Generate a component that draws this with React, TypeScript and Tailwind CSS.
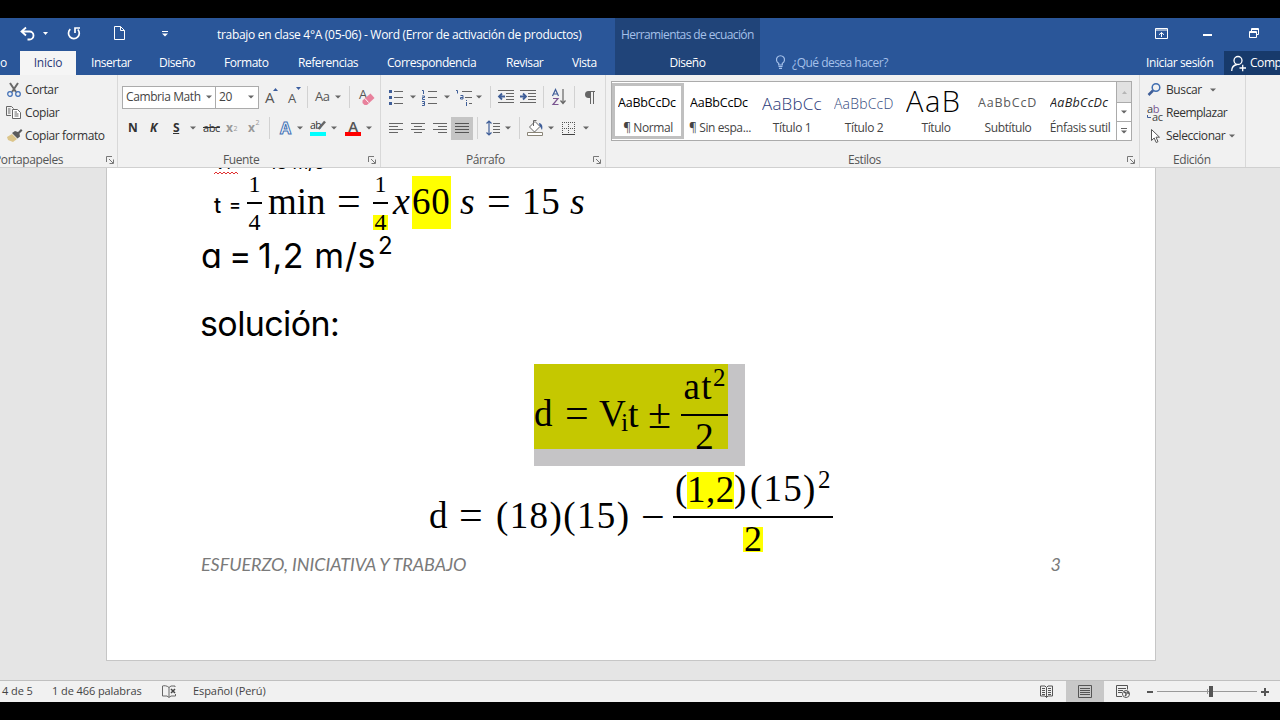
import React from 'react';

type BoxProps = { className?: string; children?: React.ReactNode };
type IconProps = BoxProps & { w: number; h: number };

const Icon: React.FC<IconProps> = ({ w, h, className = '', children }) => (
  <svg
    width={w}
    height={h}
    viewBox={`0 0 ${w} ${h}`}
    fill="none"
    className={`block shrink-0 overflow-visible ${className}`}
  >
    {children}
  </svg>
);

const Caret: React.FC<{ className?: string }> = ({ className = '' }) => (
  <Icon w={6} h={4} className={className}>
    <path d="M0 0.5h6l-3 3z" fill="#666" />
  </Icon>
);

const Sep: React.FC<{ className?: string }> = ({ className = '' }) => (
  <div className={`w-px h-[22px] shrink-0 bg-[#d2d2d2] ${className}`} />
);

// Piece of a formula or a text line
const Part: React.FC<BoxProps> = ({ className = '', children }) => (
  <span className={`block shrink-0 whitespace-nowrap ${className}`}>{children}</span>
);

const Launcher: React.FC<{ className?: string }> = ({ className = '' }) => (
  <Icon w={8} h={8} className={className}>
    <path d="M0.5 6V0.5H6M3 3l4 4M7.5 3.5v4h-4" stroke="#777" />
  </Icon>
);

const tabs = [
  { label: 'Insertar', className: 'w-[83px] pl-[15px]' },
  { label: 'Diseño', className: 'w-[65px]' },
  { label: 'Formato', className: 'w-[74px]' },
  { label: 'Referencias', className: 'w-[89px]' },
  { label: 'Correspondencia', className: 'w-[119px]' },
  { label: 'Revisar', className: 'w-[66px]' },
  { label: 'Vista', className: 'w-[43px]' },
];

const styles = [
  { label: '¶ Normal', sample: 'AaBbCcDc', className: 'text-[12.5px] text-black tracking-[-0.2px]', active: true },
  { label: '¶ Sin espa...', sample: 'AaBbCcDc', className: 'text-[12.5px] text-black tracking-[-0.2px]' },
  { label: 'Título 1', sample: 'AaBbCc', className: 'text-[17px] font-light text-[#2b3a78] tracking-[0.2px]' },
  { label: 'Título 2', sample: 'AaBbCcD', className: 'text-[14px] font-light text-[#33497c] tracking-[0.2px]' },
  { label: 'Título', sample: 'AaB', className: 'text-[29px] font-light text-black tracking-[1.5px] pb-[7px]' },
  { label: 'Subtítulo', sample: 'AaBbCcD', className: 'text-[12.5px] text-[#5a5a5a] tracking-[0.8px]' },
  { label: 'Énfasis sutil', sample: 'AaBbCcDc', className: 'text-[12.5px] italic text-[#222] tracking-[0.3px]' },
];

const TitleBar = () => (
  <div className="flex h-[33px] items-center text-white">
    <Icon w={15} h={14} className="ml-[20px] mt-[-2px]">
      <path d="M6 0.5L1.500 4.500 6 8.500M2 4.500h7.500a4 4 0 0 1 0 8H7.500" stroke="#fff" strokeWidth="1.8" />
    </Icon>
    <Icon w={5} h={3} className="ml-[8px] mt-[-3px]">
      <path d="M0 0h5L2.500 3z" fill="#fff" />
    </Icon>
    <Icon w={14} h={13} className="ml-[19px] mt-[-3px]">
      <path d="M3.300 2.200A5.400 5.400 0 1 0 10.800 2.500M8 6V1h5" stroke="#fff" strokeWidth="1.7" />
    </Icon>
    <Icon w={12} h={14} className="ml-[32px] mt-[-3px]">
      <path d="M1.500 0.500h6l4 4v9h-10zM7.500 0.500v4h4" stroke="#fff" />
    </Icon>
    <Icon w={6} h={6} className="ml-[37px] mt-[-2px]">
      <path d="M0 0.500h6" stroke="#fff" />
      <path d="M0 2.500h6l-3 3z" fill="#fff" />
    </Icon>
    <div className="ml-[49px] w-[398px] whitespace-nowrap text-[12px] tracking-[-0.3px]">
      trabajo en clase 4°A (05-06) - Word (Error de activación de productos)
    </div>
    <div className="flex h-full w-[145px] items-center whitespace-nowrap bg-[#204479] pl-[6px] text-[12px] tracking-[-0.6px] text-[#a5c0ea]">
      Herramientas de ecuación
    </div>
    <Icon w={13} h={11} className="ml-[395px] mt-[-2px]">
      <path d="M0.500 0.500h12v10H0.500zM0 2h13M6.500 9V4.500M4 6.800l2.500-2.300L9 6.800" stroke="#fff" />
    </Icon>
    <div className="ml-[35px] h-[2px] w-[9px] bg-white" />
    <Icon w={10} h={10} className="ml-[37px] mt-[-3px]">
      <path d="M0.500 3.500h7v6h-7zM0 4.500h8M2.500 3V0.500h7v6H8M2.500 1.500h7" stroke="#fff" />
    </Icon>
  </div>
);

const TabBar = () => (
  <div className="flex h-6 items-stretch whitespace-nowrap text-[12px] tracking-[-0.45px] text-white">
    <div className="flex w-[20px] items-center">o</div>
    <div className="flex w-14 items-center justify-center bg-[#f5f5f5] text-[#2b3a78] tracking-[-0.2px]">Inicio</div>
    {tabs.map((tab) => (
      <div key={tab.label} className={`flex shrink-0 items-center ${tab.className}`}>
        {tab.label}
      </div>
    ))}
    <div className="flex w-[145px] items-center justify-center bg-[#204479]">Diseño</div>
    <div className="flex w-[386px] items-center pl-[16px] text-[#a5c0ea]">
      <Icon w={9} h={14} className="mt-[-2px]">
        <path d="M2.700 10V8.300A4 4 0 1 1 6.300 8.300V10zM2.500 11.500h4M3 13.300h3" stroke="#a5c0ea" strokeWidth="1.200" />
      </Icon>
      <span className="ml-[7px] tracking-[-0.52px]">¿Qué desea hacer?</span>
    </div>
    <div className="flex w-[78px] items-center tracking-[-0.4px]">Iniciar sesión</div>
    <div className="ml-auto flex w-[56px] items-center overflow-hidden bg-[#173a6b] pl-[7px]">
      <Icon w={15} h={15}>
        <circle cx="7" cy="4.500" r="4" stroke="#fff" strokeWidth="1.300" />
        <path d="M0.700 15c0-4 2.500-6 5.300-6.500M8.500 12h6.500M11.700 8.800v6.400" stroke="#fff" strokeWidth="1.300" />
      </Icon>
      <span className="ml-[4px]">Compartir</span>
    </div>
  </div>
);

const ClipboardGroup = () => (
  <div className="flex h-full w-[118px] flex-col pt-[3px]">
    <div className="flex h-[23px] items-center">
      <Icon w={14} h={14} className="ml-[7px]">
        <path d="M3 0l6 9M11 0L5 9" stroke="#6a6a6a" strokeWidth="2" />
        <circle cx="3" cy="11" r="2.300" stroke="#3e6db5" strokeWidth="1.200" />
        <circle cx="11" cy="11" r="2.300" stroke="#3e6db5" strokeWidth="1.200" />
      </Icon>
      <span className="ml-[4px]">Cortar</span>
    </div>
    <div className="flex h-[23px] items-center">
      <Icon w={15} h={13} className="ml-[6px]">
        <path d="M5 9.500H0.500v-9h5l2 2M2 3h2.500M2 5h2.500M2 7h2.500" stroke="#666" />
        <path d="M6.500 3.500h5l3 3v6h-8zM8.500 6h2.500M8.500 8h4M8.500 10h4" stroke="#666" fill="#fff" />
      </Icon>
      <span className="ml-[4px]">Copiar</span>
    </div>
    <div className="flex h-[23px] items-center">
      <Icon w={15} h={13} className="ml-[7px]">
        <path d="M0 8l5-3 5 5-4 3-5-2z" fill="#dcc58a" />
        <path d="M5 4l3-2 3 1 3-3 1.500 1.500-3 3 .5 3-2.500 2z" fill="#5c5c5c" />
      </Icon>
      <span className="ml-[3px]">Copiar formato</span>
    </div>
    <div className="mt-auto flex h-[15px] items-center text-[#555]">
      <span className="ml-[-6px] w-[112px] tracking-[-0.4px]">Portapapeles</span>
      <Launcher />
    </div>
  </div>
);

const FontGroup = () => (
  <div className="flex h-full w-[263px] flex-col pt-[10px]">
    <div className="flex h-[24px] items-center">
      <div className="ml-[4px] flex h-[23px] w-[94px] items-center border border-[#ababab] bg-white pl-[3px] text-[#444]">
        <span className="w-[80px] whitespace-nowrap">Cambria Math</span>
        <Caret />
      </div>
      <div className="ml-[-1px] flex h-[23px] w-[44px] items-center border border-[#ababab] bg-white pl-[3px] text-[#444]">
        <span className="w-[29px]">20</span>
        <Caret />
      </div>
      <div className="ml-[6px] flex w-[23px] text-[15px] leading-[20px] text-[#555]">
        A<Icon w={5} h={3} className="mt-[1px] ml-[-1px]"><path d="M0 3h5L2.500 0z" fill="#3b5ea0" /></Icon>
      </div>
      <div className="flex w-[19px] text-[13px] leading-[18px] text-[#555]">
        <span className="mt-[2px]">A</span>
        <Icon w={5} h={3}><path d="M0 0h5L2.500 3z" fill="#3b5ea0" /></Icon>
      </div>
      <Sep />
      <span className="ml-[7px] w-[20px] text-[13px] text-[#555]">Aa</span>
      <Caret />
      <Sep className="ml-[8px]" />
      <div className="ml-[9px] flex text-[13px] text-[#555]">
        <span className="mt-[-5px] w-[3px]">A</span>
        <Icon w={12} h={12} className="mt-[3px]">
          <path d="M0.500 7.500l8-7 4 4.500-7.500 7H2.500l-2-2z" fill="#e8819c" />
          <path d="M3 5.500L6.500 9.500" stroke="#fff" />
        </Icon>
      </div>
    </div>
    <div className="mt-[6px] flex h-[26px] items-center whitespace-nowrap text-[12px] text-[#333]">
      <b className="ml-[10px] w-[22px]">N</b>
      <b className="w-[23px] italic">K</b>
      <b className="w-[17px] underline">S</b>
      <Caret />
      <span className="ml-[7px] w-[23px] text-[11px] tracking-[-0.4px] line-through">abc</span>
      <span className="flex w-[22px] text-[#999]"><b>x</b><span className="ml-[1px] mt-[5px] text-[7px]">2</span></span>
      <span className="flex w-[21px] text-[#999]"><b>x</b><span className="ml-[1px] mt-[-1px] text-[7px]">2</span></span>
      <Sep />
      <b className="ml-[10px] w-[14px] text-[16px] leading-[18px] text-white [-webkit-text-stroke:1px_#4472b5]">A</b>
      <Caret className="ml-[3px]" />
      <div className="ml-[7px] flex w-[16px] flex-col">
        <div className="flex h-[12px] text-[10.500px] leading-[10px] tracking-[-0.5px] text-[#333]">
          <span className="w-[6px]">ab</span>
          <Icon w={10} h={11}><path d="M2.500 9L9 1.500" stroke="#666" strokeWidth="2.500" /></Icon>
        </div>
        <div className="h-1 w-4 bg-[#00ffff]" />
      </div>
      <Caret className="ml-[5px]" />
      <div className="ml-[8px] flex w-[16px] flex-col items-center">
        <b className="h-[12px] text-[15px] leading-[12px] font-semibold text-[#555]">A</b>
        <div className="h-1 w-4 bg-[#ff0000]" />
      </div>
      <Caret className="ml-[5px]" />
    </div>
    <div className="mt-auto flex h-[15px] items-center text-[#555]">
      <span className="ml-[105px] w-[145px]">Fuente</span>
      <Launcher />
    </div>
  </div>
);

const ParagraphGroup = () => (
  <div className="flex h-full w-[225px] flex-col pt-[10px]">
    <div className="flex h-[24px] items-center">
      <Icon w={14} h={15} className="ml-[8px]">
        <path d="M5 1.500h9M5 7.500h9M5 13.500h9" stroke="#666" />
        <path d="M0 0h3v3H0zM0 6h3v3H0zM0 12h3v3H0z" fill="#3f5e98" />
      </Icon>
      <Caret className="ml-[7px]" />
      <Icon w={15} h={15} className="ml-[6px]">
        <path d="M6 1.500h9M6 7.500h9M6 13.500h9" stroke="#666" />
        <path d="M0 0.500h1.500v3.500M0 6h2.500v1.500H0.500V9.500H3M0 11.500h2.500v4H0M0.500 13.500h2" stroke="#3f5e98" />
      </Icon>
      <Caret className="ml-[7px]" />
      <Icon w={16} h={15} className="ml-[6px]">
        <path d="M6 1.500h10M9 7.500h7M13 13.500h3" stroke="#666" />
        <path d="M0 0.500h1.500v3M4.500 5.500H7V9H4.500V7.500H7M10.500 10v1M10.500 12v4" stroke="#3f5e98" />
      </Icon>
      <Caret className="ml-[4px]" />
      <Sep className="ml-[8px]" />
      <Icon w={16} h={14} className="ml-[7px]">
        <path d="M0 0.500h16M8 3.500h8M8 6.500h8M8 9.500h8M0 12.500h16" stroke="#666" />
        <path d="M7 6.500H1M4 3.500L1 6.500l3 3" stroke="#3f5e98" strokeWidth="1.800" />
      </Icon>
      <Icon w={16} h={14} className="ml-[6px]">
        <path d="M0 0.500h16M8 3.500h8M8 6.500h8M8 9.500h8M0 12.500h16" stroke="#666" />
        <path d="M0 6.500h6M3 3.500l3 3-3 3" stroke="#3f5e98" strokeWidth="1.800" />
      </Icon>
      <Sep className="ml-[7px]" />
      <Icon w={14} h={16} className="ml-[8px]">
        <path d="M0.500 7L3.500 0.500 6.500 7M1.500 5h4" stroke="#3f5e98" strokeWidth="1.200" />
        <path d="M1 9.500h5L1 15.500h5.500" stroke="#7a5590" strokeWidth="1.200" />
        <path d="M11 0v14M8.500 11.500l2.500 3 2.500-3" stroke="#666" strokeWidth="1.200" />
      </Icon>
      <Sep className="ml-[8px]" />
      <Icon w={10} h={13} className="ml-[10px]">
        <path d="M5 0.500h5M5.500 0v13M8.500 0v13" stroke="#666" />
        <path d="M6 0H3.500a3.300 3.300 0 0 0 0 7H6z" fill="#666" />
      </Icon>
    </div>
    <div className="mt-[6px] flex h-[26px] items-center">
      <Icon w={14} h={11} className="ml-[8px]">
        <path d="M0 0.500h14M0 3.500h9M0 6.500h14M0 9.500h9" stroke="#666" />
      </Icon>
      <Icon w={14} h={11} className="ml-[8px]">
        <path d="M0 0.500h14M3 3.500h8M0 6.500h14M3 9.500h8" stroke="#666" />
      </Icon>
      <Icon w={14} h={11} className="ml-[8px]">
        <path d="M0 0.500h14M5 3.500h9M0 6.500h14M5 9.500h9" stroke="#666" />
      </Icon>
      <div className="ml-[4px] flex h-[23px] w-[22px] items-center justify-center bg-[#c5c5c5]">
        <Icon w={14} h={11}><path d="M0 0.500h14M0 3.500h14M0 6.500h14M0 9.500h14" stroke="#555" /></Icon>
      </div>
      <Sep className="ml-[4px]" />
      <Icon w={14} h={16} className="ml-[8px]">
        <path d="M3 1v14M0.500 3.500L3 1l2.500 2.500M0.500 12.500L3 15l2.500-2.500" stroke="#3f5e98" strokeWidth="1.200" />
        <path d="M7 3.500h7M7 6.500h7M7 9.500h7M7 12.500h7" stroke="#666" />
      </Icon>
      <Caret className="ml-[5px]" />
      <Sep className="ml-[8px]" />
      <Icon w={16} h={16} className="ml-[7px]">
        <path d="M2.500 7L8 1.500l5 5-5.500 5.500zM6.500 6V0.500h3" stroke="#666" fill="#fff" />
        <path d="M12 3c3 .5 4 3 3 7-1-1-1-3-2.500-4z" fill="#3f5e98" />
        <path d="M0.500 12.500h15v3h-15z" stroke="#8a8577" fill="#fff" />
      </Icon>
      <Caret className="ml-[5px]" />
      <Icon w={13} h={13} className="ml-[8px]">
        <path d="M0 0.500h13M0 6.500h13M0.500 0v12M6.500 0v12M12.500 0v12" stroke="#555" strokeDasharray="1 1" />
        <path d="M0 12.500h13" stroke="#444" />
      </Icon>
      <Caret className="ml-[8px]" />
    </div>
    <div className="mt-auto flex h-[15px] items-center text-[#555]">
      <span className="ml-[85px] w-[127px]">Párrafo</span>
      <Launcher />
    </div>
  </div>
);

const StylesGroup = () => (
  <div className="flex h-full w-[534px] flex-col pt-[6px]">
    <div className="ml-[5px] flex h-[60px] w-[521px] border border-[#ababab] bg-white">
      {styles.map((s) => (
        <div
          key={s.label}
          className={`my-px flex w-[72px] shrink-0 flex-col border-[3px] px-[3px] ${
            s.active ? 'border-[#c0c0c0]' : 'border-transparent'
          }`}
        >
          <div className={`flex h-[35px] shrink-0 items-center overflow-hidden whitespace-nowrap leading-none ${s.className}`}>
            {s.sample}
          </div>
          <div className="flex justify-center whitespace-nowrap leading-[14px] text-[#444]">
            {s.label}
          </div>
        </div>
      ))}
      <div className="ml-auto flex w-[15px] flex-col border-l border-[#ababab]">
        <div className="flex h-[20px] items-center justify-center bg-[#e1e1e1]">
          <Icon w={5} h={3}><path d="M0 3h5L2.500 0z" fill="#b5b5b5" /></Icon>
        </div>
        <div className="flex h-[20px] items-center justify-center border-y border-[#ababab]">
          <Caret />
        </div>
        <div className="flex flex-1 items-center justify-center">
          <Icon w={6} h={6}>
            <path d="M0 0.500h6" stroke="#666" />
            <path d="M0 2.500h6l-3 3z" fill="#666" />
          </Icon>
        </div>
      </div>
    </div>
    <div className="mt-auto flex h-[15px] items-center text-[#555]">
      <span className="ml-[242px] w-[279px]">Estilos</span>
      <Launcher />
    </div>
  </div>
);

const EditingGroup = () => (
  <div className="flex h-full w-[106px] flex-col pt-[3px]">
    <div className="flex h-[23px] items-center">
      <Icon w={13} h={13} className="ml-[8px]">
        <circle cx="8" cy="4.500" r="3.800" stroke="#3f6db0" strokeWidth="1.500" />
        <path d="M5 7.500L0.500 12" stroke="#3f5e98" strokeWidth="2.500" />
      </Icon>
      <span className="ml-[5px] w-[44px]">Buscar</span>
      <Caret />
    </div>
    <div className="flex h-[23px] items-center">
      <div className="ml-[7px] w-[16px] text-[11px] leading-[8px] text-[#444]">
        <div>a<span className="text-[#7a5590]">b</span></div>
        <div className="flex items-center">
          <Icon w={4} h={4}><path d="M0.500 0v2.500H4" stroke="#3f5e98" /></Icon>
          <span className="ml-[1px]">ac</span>
        </div>
      </div>
      <span className="ml-[3px] tracking-[-0.500px]">Reemplazar</span>
    </div>
    <div className="flex h-[23px] items-center">
      <Icon w={9} h={14} className="ml-[11px]">
        <path d="M0.500 0.500v11l2.700-2.500 2 4.500 1.800-.8-2-4.500h3.500z" stroke="#555" fill="#fff" />
      </Icon>
      <span className="ml-[6px] w-[63px] whitespace-nowrap">Seleccionar</span>
      <Caret />
    </div>
    <div className="mt-auto flex h-[15px] items-center text-[#555]">
      <span className="ml-[33px]">Edición</span>
    </div>
  </div>
);

const Ribbon = () => (
  <div className="flex h-[93px] border-b border-[#d0d0d0] bg-[#f1f1f1] text-[12px] tracking-[-0.4px] text-[#333]">
    <div className="w-[118px] shrink-0 overflow-hidden border-r border-[#d8d8d8]"><ClipboardGroup /></div>
    <div className="w-[263px] shrink-0 border-r border-[#d8d8d8]"><FontGroup /></div>
    <div className="w-[225px] shrink-0 border-r border-[#d8d8d8]"><ParagraphGroup /></div>
    <div className="w-[534px] shrink-0 border-r border-[#d8d8d8]"><StylesGroup /></div>
    <div className="w-[106px] shrink-0 border-r border-[#d8d8d8]"><EditingGroup /></div>
  </div>
);

const comic = "font-['Inter',sans-serif] [font-feature-settings:'cv11']";

const Fraction: React.FC<{ marked?: boolean }> = ({ marked }) => (
  <div className="flex w-[15px] shrink-0 flex-col items-center">
    <Part className="h-[26px] text-[24px] leading-[17px]">1</Part>
    <div className="h-[2px] w-[15px] bg-black" />
    <Part className={`mt-[11px] h-[15px] w-[15px] text-center text-[24px] ${marked ? 'bg-[#ffff00]' : ''}`}>
      <span className="relative top-[-5px]">4</span>
    </Part>
  </div>
);

const Page = () => (
  <div className="ml-[106px] flex h-[493px] w-[1050px] flex-col overflow-hidden border-x border-b border-[#c6c6c6] bg-white font-['Liberation_Serif',serif] text-[36px] leading-none text-black">
    {/* Tail of the line scrolled under the ribbon */}
    <div className="flex h-[8px] items-end">
      <div className="ml-[107px] flex h-[8px] w-[26px] flex-col overflow-hidden">
        <Part className={`mt-[-13px] h-[16px] text-[18px] leading-[16px] ${comic}`}>Vi</Part>
        <Icon w={25} h={4}>
          <path d="M0 3l2-2 2 2 2-2 2 2 2-2 2 2 2-2 2 2 2-2 2 2 2-2 2 2" stroke="#e03030" />
        </Icon>
      </div>
      <div className="ml-[12px] flex h-[8px] overflow-hidden">
        <Part className={`mt-[-13px] h-[16px] text-[18px] leading-[16px] ${comic}`}>= 18 m/s</Part>
      </div>
    </div>
    <div className="flex h-[54px]">
      <Part className={`ml-[107px] mt-[19px] w-[15px] text-[21px] font-medium ${comic}`}>t</Part>
      <Part className={`mt-[20px] w-[18px] text-[18px] font-medium ${comic}`}>=</Part>
      <Fraction />
      <Part className="ml-[6px] mt-[7px] w-[69px] text-[37px]">min</Part>
      <Part className="mt-[7px] w-[36px] text-[42px] leading-[37px]">=</Part>
      <Fraction marked />
      <Part className="ml-[5px] mt-[6px] w-[19px] text-[38px] italic">x</Part>
      <Part className="h-[53px] w-[39px] bg-[#ffff00] pt-[7px] text-[37px] tracking-[0.800px]">60</Part>
      <Part className="ml-[9px] mt-[6px] w-[27px] text-[38px] italic">s</Part>
      <Part className="mt-[7px] w-[35px] text-[42px] leading-[37px]">=</Part>
      <Part className="mt-[7px] w-[48px] text-[37px] tracking-[0.800px]">15</Part>
      <Part className="mt-[6px] text-[38px] italic">s</Part>
    </div>
    <div className={`flex h-[66px] ${comic}`}>
      <Part className="ml-[94px] mt-[9px] w-[28px] text-[34px]">a</Part>
      <Part className="mt-[9px] w-[29px] text-[34px]">=</Part>
      <Part className="mt-[9px] w-[120px] text-[34px] tracking-[0.600px]">1,2 m/s</Part>
      <Part className="mt-[4px] text-[24px]">2</Part>
    </div>
    <div className={`flex h-[68px] ${comic}`}>
      <Part className="ml-[93px] mt-[11px] text-[34px] tracking-[-0.600px]">solución:</Part>
    </div>
    <div className="ml-[427px] h-[102px] w-[211px] bg-[#c5c4c6]">
      <div className="flex h-[85px] w-[194px] bg-[#c5c800]">
        <Part className="mt-[31px] w-[31px] text-[37px]">d</Part>
        <Part className="mt-[31px] w-[34px] text-[42px] leading-[37px]">=</Part>
        <Part className="mt-[31px] w-[18px] text-[37px]">V</Part>
        <Part className="ml-[4px] mt-[46px] w-[7px] text-[26px]">i</Part>
        <Part className="mt-[31px] w-[20px] text-[38px]">t</Part>
        <Part className="mt-[31px] w-[33px] text-[42px] leading-[38px]">±</Part>
        <div className="flex w-[47px] flex-col items-center">
          <div className="flex h-[50px] shrink-0">
            <Part className="mt-[4px] text-[37px] tracking-[1.500px]">at</Part>
            <Part className="mt-[1px] text-[25px]">2</Part>
          </div>
          <div className="h-[2px] w-full shrink-0 bg-black" />
          <Part className="mt-[2px] text-[37px]">2</Part>
        </div>
      </div>
    </div>
    <div className="ml-[322px] flex h-[87px]">
      <Part className="mt-[31px] w-[30px] text-[37px]">d</Part>
      <Part className="mt-[31px] w-[37px] text-[42px] leading-[37px]">=</Part>
      <Part className="mt-[31px] w-[145px] text-[37px] tracking-[1.400px]">(18)(15)</Part>
      <Part className="mt-[31px] w-[32px] text-[42px] leading-[40px]">−</Part>
      <div className="flex w-[160px] flex-col items-center">
        <div className="flex h-[50px] w-full shrink-0 pl-[2px]">
          <Part className="mt-[4px] w-[12px] text-[37px]">(</Part>
          <Part className="mt-[6px] h-[37px] w-[47px] bg-[#ffff00] text-[37px] leading-[35px] tracking-[0.500px]">1,2</Part>
          <Part className="mt-[4px] w-[16px] text-[37px]">)</Part>
          <Part className="mt-[4px] w-[68px] text-[37px] tracking-[1.200px]">(15)</Part>
          <Part className="mt-[1px] text-[25px]">2</Part>
        </div>
        <div className="h-[2px] w-full shrink-0 bg-black" />
        <Part className="mt-[9px] h-[25px] w-[20px] bg-[#ffff00] text-center">
          <span className="relative top-[-6px]">2</span>
        </Part>
      </div>
    </div>
    <div className="mt-[-1px] flex items-center px-[94px] font-['Lato',sans-serif] text-[18px] italic leading-[24px] text-[#7a7a7a]">
      <span className="tracking-[-0.070px]">ESFUERZO, INICIATIVA Y TRABAJO</span>
      <span className="ml-auto">3</span>
    </div>
  </div>
);

const StatusBar = () => (
  <div className="flex h-[22px] items-center whitespace-nowrap border-t border-[#c0c0c0] bg-[#f1f1f1] text-[11px] tracking-[-0.08px] text-[#444]">
    <span className="ml-[2px] w-[50px]">4 de 5</span>
    <span className="w-[110px]">1 de 466 palabras</span>
    <Icon w={14} h={13}>
      <path d="M7 12V2.500C5 0.500 2 0.500 0.500 1v10h4.500l2 1.500 2-1.500h4.500V9M7 2.500L9 1h4v1" stroke="#666" />
      <path d="M9 4l4 4M13 4L9 8" stroke="#444" strokeWidth="1.500" />
    </Icon>
    <span className="ml-[17px]">Español (Perú)</span>
    <Icon w={13} h={13} className="ml-auto">
      <path d="M0.500 1h4.500l1.500 1.500L8 1h4.500v10H8l-1.500 1.500L5 11H0.500zM6.500 2.500v10M2 3.500h3M2 5.500h3M2 7.500h3M2 9.500h3M8 3.500h3M8 5.500h3M8 7.500h3M8 9.500h3" stroke="#555" />
    </Icon>
    <div className="ml-[13px] flex h-full w-[38px] items-center justify-center bg-[#c8c8c8]">
      <Icon w={14} h={13}>
        <path d="M0.500 0.500h13v12h-13zM2 3.500h10M2 5.500h10M2 7.500h10M2 9.500h10" stroke="#555" />
      </Icon>
    </div>
    <Icon w={14} h={13} className="ml-[12px]">
      <path d="M6 11.500H0.500v-11h11v4M2 3.500h8M2 5.500h5M2 7.500h4" stroke="#555" />
      <circle cx="10" cy="9" r="3.500" fill="#fff" stroke="#555" />
      <path d="M8 7l2 1v2l-1 1M11 6.500l1.500 1.500-1 1" stroke="#555" strokeWidth="1.500" />
    </Icon>
    <div className="ml-[17px] h-[2px] w-[6px] bg-[#555]" />
    <Icon w={100} h={11} className="ml-[4px]">
      <path d="M0 5.500h100M50.500 3v5" stroke="#999" />
      <path d="M52 0h4v11h-4z" fill="#555" />
    </Icon>
    <Icon w={8} h={8} className="ml-[4px] mr-[11px]">
      <path d="M0 4h8M4 0v8" stroke="#555" strokeWidth="2" />
    </Icon>
  </div>
);

export default function App() {
  return (
    <div className="flex h-[720px] w-[1280px] flex-col overflow-hidden bg-black pt-[18px] font-['Open_Sans','Noto_Sans',sans-serif]">
      <div className="bg-[#2a5699]">
        <TitleBar />
        <TabBar />
      </div>
      <Ribbon />
      <div className="h-[512px] bg-[#e5e5e5]">
        <Page />
      </div>
      <StatusBar />
    </div>
  );
}
